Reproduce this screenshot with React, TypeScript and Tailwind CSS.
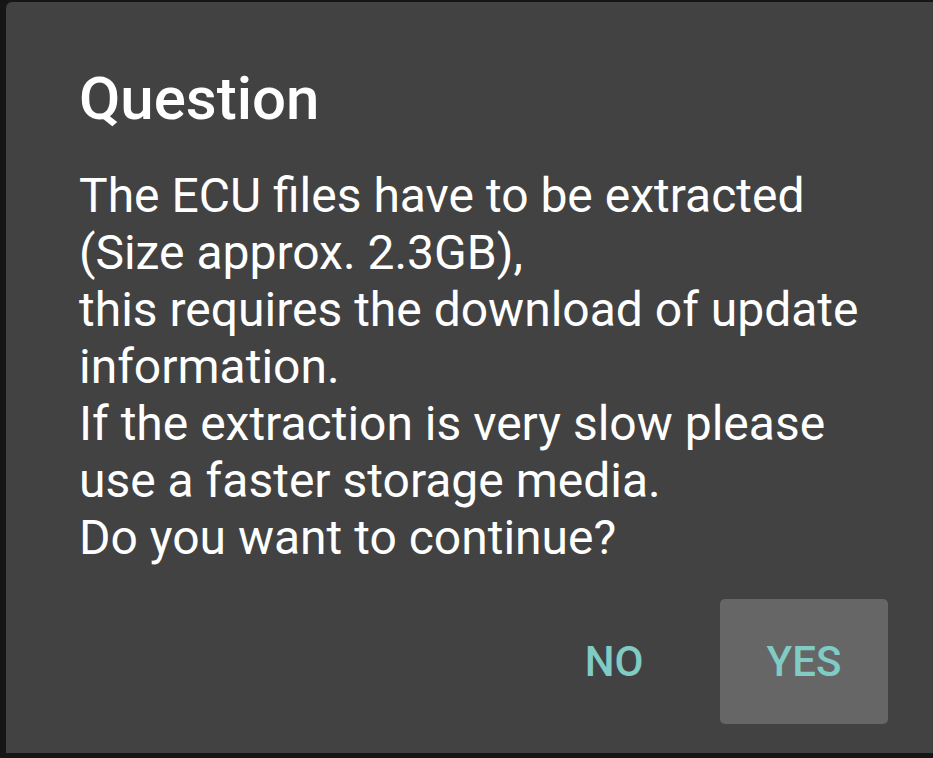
export default function App() {
  return (
    <div className="w-[933px] h-[758px] bg-[#161616] overflow-hidden pl-[6px] pt-[2px] pb-[5px]" style={{ fontFamily: "Roboto, 'Noto Sans', sans-serif" }}>
      <div className="h-full bg-[#424242] rounded-tl-[6px] flex flex-col">
        <h1 className="pl-[73px] pt-[65px] text-[60px] leading-[64px] font-medium text-white">Question</h1>
        <p className="pl-[73px] mt-[36px] text-[48px] leading-[57px] text-white whitespace-pre-line">
          {"The ECU files have to be extracted\n(Size approx. 2.3GB),\nthis requires the download of update\ninformation.\nIf the extraction is very slow please\nuse a faster storage media.\nDo you want to continue?"}
        </p>
        <div className="mt-auto mb-[29px] pr-[45px] flex justify-end gap-[22px]">
          <button className="w-[168px] h-[125px] rounded-[5px] text-[#80cbc4] text-[42px] font-medium">NO</button>
          <button className="w-[168px] h-[125px] rounded-[5px] bg-[#666666] text-[#80cbc4] text-[42px] font-medium">YES</button>
        </div>
      </div>
    </div>
  )
}
